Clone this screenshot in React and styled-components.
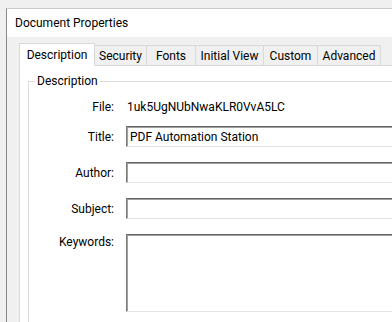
import React from 'react';
import styled, { createGlobalStyle } from 'styled-components';

const GlobalStyle = createGlobalStyle`
  html, body {
    margin: 0;
    padding: 0;
    background: #f0f0f0;
    overflow: hidden;
  }

  body {
    font-family: Roboto, 'Noto Sans', Arial, sans-serif;
    font-size: 12px;
    color: #000;
  }
`;

const Screen = styled.div`
  width: 392px;
  height: 322px;
  overflow: hidden;
  padding: 8px 0 0 6px;
  box-sizing: border-box;
  background: #f0f0f0;
`;

const Window = styled.div`
  width: 640px;
  height: 400px;
  background: #f0f0f0;
  border-left: 1px solid #8a8a8a;
  border-top: 1px solid #c9c9c9;
  display: flex;
  flex-direction: column;
`;

const TitleBar = styled.div`
  height: 28px;
  line-height: 28px;
  padding-left: 8px;
  background: #fff;
  font-size: 12px;
`;

const Body = styled.div`
  padding: 6px 0 0 12px;
  display: flex;
  flex-direction: column;
`;

const TabStrip = styled.div`
  display: flex;
  align-items: flex-end;
  height: 22px;
  position: relative;
  z-index: 1;
`;

const Tab = styled.div`
  box-sizing: border-box;
  width: ${p => p.$width}px;
  height: ${p => (p.$active ? '23px' : '20px')};
  margin-bottom: ${p => (p.$active ? '-1px' : '0')};
  padding-top: ${p => (p.$active ? '2px' : '1px')};
  line-height: 18px;
  text-align: center;
  background: ${p => (p.$active ? '#fff' : '#f0f0f0')};
  border: 1px solid #d9d9d9;
  border-bottom: none;
  margin-left: -1px;
  white-space: nowrap;

  &:first-child {
    margin-left: 0;
  }
`;

const Panel = styled.div`
  background: #fff;
  border: 1px solid #d9d9d9;
  height: 300px;
  padding: 8px 0 0 8px;
`;

const Group = styled.fieldset`
  margin: 0;
  padding: 8px 0 0 0;
  border: 1px solid #dcdcdc;
  border-right: none;
  height: 300px;
`;

const Legend = styled.legend`
  margin-left: 6px;
  padding: 0 2px;
  font-size: 12px;
`;

const Row = styled.div`
  display: flex;
  align-items: ${p => (p.$top ? 'flex-start' : 'center')};
  margin-top: ${p => p.$gap}px;
  min-height: 21px;
`;

const Label = styled.div`
  width: 85px;
  text-align: right;
  padding-right: 12px;
  flex: none;
  line-height: 16px;
`;

const Value = styled.div`
  padding-left: 1px;
  line-height: 16px;
`;

const Input = styled.div`
  box-sizing: border-box;
  width: 320px;
  height: ${p => p.$height || 21}px;
  background: #fff;
  border-top: 1px solid #646464;
  border-left: 1px solid #7a7a7a;
  border-bottom: 1px solid #e3e3e3;
  border-right: 1px solid #e3e3e3;
  box-shadow: inset 1px 1px 0 #a0a0a0;
  padding: 1px 0 0 3px;
  line-height: 18px;
  white-space: nowrap;
`;

const fields = [
  { label: 'Title:', value: 'PDF Automation Station', gap: 9 },
  { label: 'Author:', value: '', gap: 15 },
  { label: 'Subject:', value: '', gap: 15 },
];

const tabs = [
  { name: 'Description', width: 76 },
  { name: 'Security', width: 53 },
  { name: 'Fonts', width: 50 },
  { name: 'Initial View', width: 69 },
  { name: 'Custom', width: 55 },
  { name: 'Advanced', width: 64 },
];

export default function App() {
  return (
    <>
      <GlobalStyle />
      <Screen>
        <Window>
          <TitleBar>Document Properties</TitleBar>
          <Body>
            <TabStrip>
              {tabs.map((t, i) => (
                <Tab key={t.name} $active={i === 0} $width={t.width}>
                  {t.name}
                </Tab>
              ))}
            </TabStrip>
            <Panel>
              <Group>
                <Legend>Description</Legend>
                <Row $gap={0}>
                  <Label>File:</Label>
                  <Value>1uk5UgNUbNwaKLR0VvA5LC</Value>
                </Row>
                {fields.map(f => (
                  <Row key={f.label} $gap={f.gap}>
                    <Label>{f.label}</Label>
                    <Input>{f.value}</Input>
                  </Row>
                ))}
                <Row $gap={15} $top>
                  <Label>Keywords:</Label>
                  <Input $height={78} />
                </Row>
              </Group>
            </Panel>
          </Body>
        </Window>
      </Screen>
    </>
  );
}
